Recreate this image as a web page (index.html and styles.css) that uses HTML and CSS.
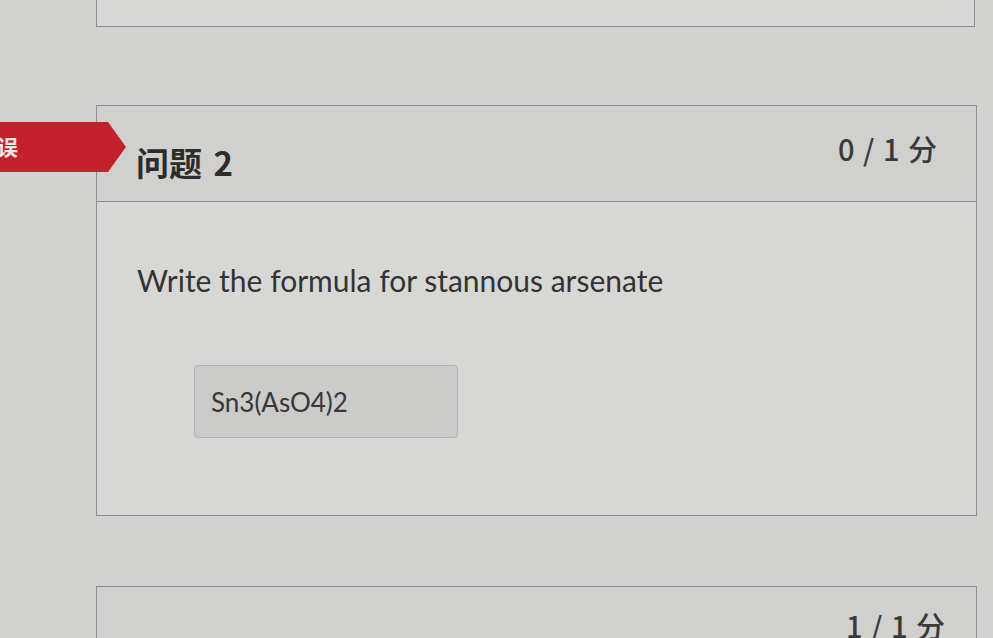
FILE: index.html
```html
<!DOCTYPE html>
<html>
<head>
<meta charset="utf-8">
<link rel="stylesheet" href="styles.css">
</head>
<body>
<div class="page">
  <div class="card card-prev"></div>

  <div class="card question">
    <div class="badge"><span class="badge-text">错误</span></div>
    <div class="q-header">
      <h2 class="q-title">问题 2</h2>
      <div class="q-score">0 / 1 分</div>
    </div>
    <div class="q-body">
      <p class="q-text">Write the formula for stannous arsenate</p>
      <div class="answer">Sn3(AsO4)2</div>
    </div>
  </div>

  <div class="card question next">
    <div class="q-header">
      <h2 class="q-title">问题 3</h2>
      <div class="q-score">1 / 1 分</div>
    </div>
  </div>
</div>
</body>
</html>
```

FILE: styles.css
```css
html, body {
  margin: 0;
  padding: 0;
  background: #d2d2d1;
  height: 100%;
  overflow: hidden;
}
body {
  font-family: Lato, "Noto Sans CJK SC", sans-serif;
  color: #2f2f2f;
}
.page {
  display: flex;
  flex-direction: column;
  padding-left: 96px;
  width: 881px;
}
.card {
  border: 1px solid #8e8e8e;
  background: #d7d7d6;
  box-sizing: border-box;
}
.card-prev {
  height: 27px;
  border-top: none;
  width: 879px;
}
.question {
  position: relative;
  margin-top: 78px;
}
.badge {
  position: absolute;
  left: -97px;
  top: 16px;
  width: 126px;
  height: 50px;
  background: #c3222c;
  clip-path: polygon(0 0, 108px 0, 126px 25px, 108px 50px, 0 50px);
  overflow: hidden;
}
.badge-text {
  display: block;
  margin-left: -24px;
  margin-top: 12px;
  color: #f2e6e6;
  font-family: "Noto Sans CJK SC", sans-serif;
  font-weight: 700;
  font-size: 21px;
  line-height: 24px;
}
.q-header {
  display: flex;
  justify-content: space-between;
  align-items: flex-start;
  height: 96px;
  box-sizing: border-box;
  padding: 22px 38px 0 39px;
  background: #d0d0cf;
  border-bottom: 1px solid #8e8e8e;
}
.q-title {
  margin: 12px 0 0 0;
  font-family: "Noto Sans CJK SC", sans-serif;
  font-weight: 600;
  font-size: 33px;
  line-height: 44px;
  color: #2c2c2c;
  word-spacing: 4px;
}
.q-score {
  font-family: "Noto Sans CJK SC", sans-serif;
  font-weight: 500;
  font-size: 29px;
  line-height: 40px;
  color: #3a3a3a;
  letter-spacing: 1px;
}
.q-body {
  height: 313px;
  box-sizing: border-box;
  padding: 59px 40px 0 40px;
}
.q-text {
  margin: 0;
  font-size: 30px;
  line-height: 38px;
  color: #333;
}
.answer {
  margin-top: 66px;
  margin-left: 57px;
  width: 264px;
  height: 73px;
  box-sizing: border-box;
  border: 1px solid #b3b3b3;
  border-radius: 4px;
  background: #cbcbca;
  padding-left: 16px;
  display: flex;
  align-items: center;
  font-size: 26px;
  color: #383838;
}
.next {
  margin-top: 70px;
}
.next .q-header {
  padding-top: 18px;
  padding-right: 30px;
  padding-left: 48px;
}
.next .q-title {
  margin-top: 28px;
}
```
